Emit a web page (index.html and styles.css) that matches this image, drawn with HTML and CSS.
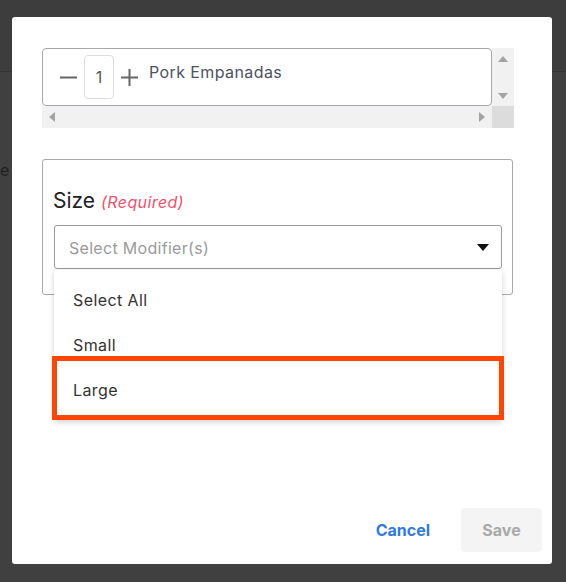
FILE: index.html
```html
<!DOCTYPE html>
<html>
<head>
<meta charset="utf-8">
<link rel="stylesheet" href="styles.css">
</head>
<body>
<div class="page">
  <div class="topbar"></div>
  <div class="behind"><span class="behind-text">e</span></div>

  <div class="modal">
    <div class="scroller">
      <div class="item-box">
        <div class="stepper">
          <span class="step-btn">
            <svg width="17" height="17" viewBox="0 0 17 17"><path d="M0 8.5H17" stroke="#666" stroke-width="2"/></svg>
          </span>
          <span class="qty">1</span>
          <span class="step-btn">
            <svg width="17" height="17" viewBox="0 0 17 17"><path d="M0 8.5H17M8.5 0V17" stroke="#666" stroke-width="2"/></svg>
          </span>
        </div>
        <div class="item-name">Pork Empanadas</div>
      </div>
      <div class="vbar">
        <svg width="10" height="6" viewBox="0 0 10 6"><path d="M5 0L10 6H0Z" fill="#a3a3a3"/></svg>
        <svg width="10" height="6" viewBox="0 0 10 6"><path d="M0 0H10L5 6Z" fill="#a3a3a3"/></svg>
      </div>
      <div class="hbar">
        <svg width="6" height="10" viewBox="0 0 6 10"><path d="M0 5L6 0V10Z" fill="#a3a3a3"/></svg>
        <svg width="6" height="10" viewBox="0 0 6 10"><path d="M6 5L0 0V10Z" fill="#a3a3a3"/></svg>
      </div>
      <div class="corner"></div>
    </div>

    <div class="modifier-box">
      <div class="mod-label">Size <em class="req">(Required)</em></div>
      <div class="select-wrap">
        <div class="select">
          <span class="placeholder">Select Modifier(s)</span>
          <svg width="12" height="7" viewBox="0 0 12 7"><path d="M0 0H12L6 7Z" fill="#111"/></svg>
        </div>
        <div class="dropdown">
          <div class="option">Select All</div>
          <div class="option">Small</div>
          <div class="option">Large</div>
          <div class="highlight"></div>
        </div>
      </div>
    </div>

    <div class="footer">
      <button class="btn-cancel">Cancel</button>
      <button class="btn-save">Save</button>
    </div>
  </div>
</div>
</body>
</html>
```
FILE: styles.css
```css
html, body {
  margin: 0;
  padding: 0;
}
body {
  width: 566px;
  height: 582px;
  overflow: hidden;
  background: #404040;
  font-family: Inter, "Liberation Sans", sans-serif;
}
.page {
  position: relative;
  width: 566px;
  height: 582px;
}
.topbar {
  height: 71px;
  border-bottom: 1px solid #343434;
  background: #3d3d3d;
}
.behind {
  padding-top: 88px;
  font-size: 16px;
  color: #202020;
}
.modal {
  position: absolute;
  left: 12px;
  top: 17px;
  width: 540px;
  height: 547px;
  background: #fff;
  border-radius: 3px;
  box-sizing: border-box;
  padding: 31px 10px 12px 30px;
  display: flex;
  flex-direction: column;
}
.scroller {
  width: 472px;
  display: grid;
  grid-template-columns: 450px 22px;
  grid-template-rows: 58px 22px;
}
.item-box {
  border: 1px solid #a7a7ae;
  border-radius: 4px;
  box-sizing: border-box;
  display: flex;
  align-items: flex-start;
  padding: 6px 0 0 17px;
}
.stepper {
  display: flex;
  align-items: center;
  gap: 7px;
}
.step-btn {
  display: flex;
  width: 17px;
  height: 17px;
}
.qty {
  width: 30px;
  height: 44px;
  border: 1px solid #dcdce0;
  border-radius: 4px;
  box-sizing: border-box;
  display: flex;
  align-items: center;
  justify-content: center;
  font-size: 16px;
  color: #5a5550;
}
.item-name {
  margin-left: 11px;
  margin-top: 7px;
  font-size: 16px;
  letter-spacing: 0.4px;
  color: #4c5260;
}
.vbar {
  background: #f1f1f1;
  display: flex;
  flex-direction: column;
  justify-content: space-between;
  align-items: center;
  padding: 8px 0 7px;
}
.hbar {
  background: #f1f1f1;
  display: flex;
  justify-content: space-between;
  align-items: center;
  padding: 0 7px 0 7px;
}
.corner {
  background: #dcdcdc;
}
.modifier-box {
  margin-top: 31px;
  width: 471px;
  height: 136px;
  box-sizing: border-box;
  border: 1px solid #a9a9a9;
  border-radius: 3px;
  padding: 29px 10px 0 10px;
}
.mod-label {
  font-size: 21px;
  color: #222;
  line-height: 24px;
  display: flex;
  align-items: baseline;
  gap: 6px;
}
.req {
  font-size: 16px;
  letter-spacing: 0.4px;
  color: #f2506a;
}
.select-wrap {
  position: relative;
  margin-top: 11px;
  margin-left: 1px;
  width: 448px;
}
.select {
  height: 44px;
  box-sizing: border-box;
  border: 1px solid #9a9a9a;
  border-radius: 3px;
  display: flex;
  align-items: center;
  justify-content: space-between;
  padding: 1px 12px 0 14px;
}
.placeholder {
  font-size: 16px;
  letter-spacing: 0.3px;
  color: #9a9a9a;
}
.dropdown {
  position: absolute;
  left: 0;
  top: 45px;
  width: 448px;
  background: #fff;
  box-shadow: 0 2px 6px rgba(0,0,0,0.18);
  padding: 7px 0 8px;
  z-index: 2;
}
.option {
  height: 45px;
  display: flex;
  align-items: center;
  padding-left: 19px;
  font-size: 16px;
  letter-spacing: 0.4px;
  color: #333;
}
.highlight {
  position: absolute;
  left: -2px;
  right: -2px;
  top: 86px;
  height: 64px;
  border: 5px solid #ff4500;
  box-sizing: border-box;
}
.footer {
  margin-top: auto;
  display: flex;
  justify-content: flex-end;
  align-items: center;
  gap: 16px;
}
.btn-cancel {
  border: none;
  background: none;
  font-family: inherit;
  font-size: 16px;
  font-weight: 700;
  color: #2f7ae5;
  padding: 0 15px;
  height: 44px;
}
.btn-save {
  border: none;
  background: #f4f4f4;
  border-radius: 4px;
  width: 81px;
  height: 44px;
  font-family: inherit;
  font-size: 16px;
  font-weight: 700;
  color: #a9a9a9;
}
```
